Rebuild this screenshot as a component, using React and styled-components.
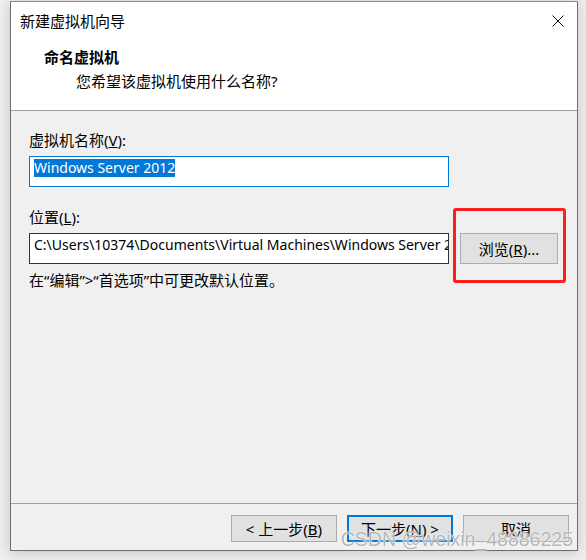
import React from 'react';
import styled, { createGlobalStyle } from 'styled-components';

const GlobalStyle = createGlobalStyle`
  html, body {
    margin: 0;
    padding: 0;
    background: #efefef;
  }
  body {
    font-family: "Noto Sans", "Noto Sans CJK SC", sans-serif;
    font-size: 15px;
    color: #000;
  }
`;

const Mnemonic = ({ k }) => <u>{k}</u>;

const CloseIcon = () => (
  <svg width="12" height="12" viewBox="0 0 12 12">
    <path d="M0.5 0.5 L11.5 11.5 M11.5 0.5 L0.5 11.5" stroke="#111" strokeWidth="1" fill="none" />
  </svg>
);

const App = () => (
  <>
    <GlobalStyle />
    <Page>
      <Dialog>
        <Header>
          <TitleBar>
            <span>新建虚拟机向导</span>
            <CloseButton>
              <CloseIcon />
            </CloseButton>
          </TitleBar>
          <StepTitle>命名虚拟机</StepTitle>
          <StepHint>您希望该虚拟机使用什么名称?</StepHint>
        </Header>

        <Body>
          <Label>
            虚拟机名称(<Mnemonic k="V" />):
          </Label>
          <Field focused>
            <Selection>Windows Server 2012</Selection>
          </Field>

          <Label gap={20}>
            位置(<Mnemonic k="L" />):
          </Label>
          <FieldRow>
            <Field>
              <span>C:\Users\10374\Documents\Virtual Machines\Windows Server 2012</span>
            </Field>
            <Marked>
              <Button width={98}>
                浏览(<Mnemonic k="R" />)...
              </Button>
            </Marked>
          </FieldRow>
          <Note>在“编辑”&gt;“首选项”中可更改默认位置。</Note>
        </Body>

        <Footer>
          <Button>
            &lt; 上一步(<Mnemonic k="B" />)
          </Button>
          <Button primary>
            下一步(<Mnemonic k="N" />) &gt;
          </Button>
          <Button>取消</Button>
        </Footer>

        <Watermark>CSDN @weixin_48886225</Watermark>
      </Dialog>
    </Page>
  </>
);

const Page = styled.div`
  width: 586px;
  height: 560px;
  overflow: hidden;
  padding: 1px 0 0 10px;
  box-sizing: border-box;
`;

const Dialog = styled.div`
  position: relative;
  width: 568px;
  height: 550px;
  box-sizing: border-box;
  display: flex;
  flex-direction: column;
  background: #f0f0f0;
  border: 1px solid #6e6e6e;
  border-top-color: #8c8c8c;
  box-shadow: 0 2px 12px rgba(0, 0, 0, 0.18);
`;

const Header = styled.div`
  height: 109px;
  box-sizing: border-box;
  background: #fff;
  border-bottom: 1px solid #a0a0a0;
  display: flex;
  flex-direction: column;
`;

const TitleBar = styled.div`
  height: 38px;
  display: flex;
  align-items: center;
  justify-content: space-between;
  padding: 0 13px 0 9px;
  line-height: 20px;
`;

const CloseButton = styled.div`
  display: flex;
  align-items: center;
  width: 12px;
  height: 12px;
`;

const StepTitle = styled.div`
  margin: 7px 0 0 33px;
  line-height: 20px;
  font-weight: bold;
`;

const StepHint = styled.div`
  margin: 4px 0 0 65px;
  line-height: 20px;
`;

const Body = styled.div`
  flex: 1;
  display: flex;
  flex-direction: column;
  padding: 19px 0 0 18px;
`;

const Label = styled.div`
  margin-top: ${(p) => p.gap || 0}px;
  line-height: 20px;
`;

const Field = styled.div`
  width: 420px;
  height: 31px;
  box-sizing: border-box;
  margin-top: ${(p) => (p.focused ? 6 : 0)}px;
  padding: 2px 4px 0;
  display: flex;
  align-items: flex-start;
  background: #fff;
  border: 1px solid ${(p) => (p.focused ? '#0078d7' : '#333')};
  font-size: 14px;
  line-height: 18px;
  white-space: nowrap;
  overflow: hidden;
  flex-shrink: 0;
`;

const Selection = styled.span`
  background: #0078d7;
  color: #fff;
  line-height: 18px;
`;

const FieldRow = styled.div`
  display: flex;
  align-items: center;
  gap: 11px;
  margin-top: 6px;
`;

const Marked = styled.div`
  position: relative;

  &::after {
    content: '';
    position: absolute;
    left: -7px;
    right: -8px;
    top: -25px;
    bottom: -19px;
    border: 3px solid #ff1e1e;
    border-radius: 3px;
    pointer-events: none;
  }
`;

const Note = styled.div`
  margin-top: 6px;
  line-height: 20px;
`;

const Footer = styled.div`
  height: 47px;
  box-sizing: border-box;
  border-top: 1px solid #a0a0a0;
  display: flex;
  justify-content: flex-end;
  align-items: flex-start;
  gap: 10px;
  padding: 11px 8px 0 0;
`;

const Button = styled.div`
  width: ${(p) => p.width || 106}px;
  height: ${(p) => (p.width ? 31 : 27)}px;
  box-sizing: border-box;
  display: flex;
  align-items: center;
  justify-content: center;
  background: #e1e1e1;
  border: ${(p) => (p.primary ? '2px solid #0078d7' : '1px solid #adadad')};
  white-space: nowrap;
`;

const Watermark = styled.div`
  position: absolute;
  right: 4px;
  bottom: 0px;
  font-family: "Liberation Sans", Arial, sans-serif;
  font-size: 19.5px;
  line-height: 22px;
  color: rgba(120, 120, 120, 0.55);
  text-shadow: 0 0 2px #fff, 0 0 1px #fff;
  pointer-events: none;
`;

export default App;
